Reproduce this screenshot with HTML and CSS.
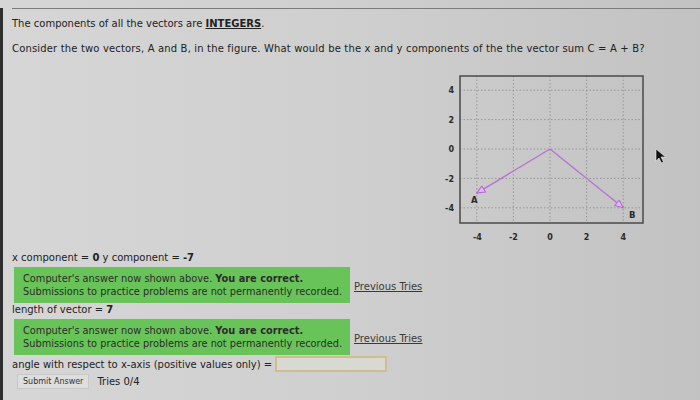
FILE: index.html
```html
<!DOCTYPE html>
<html>
<head>
<meta charset="utf-8">
<link rel="stylesheet" href="styles.css">
</head>
<body>
<div class="page">
  <div class="rule"></div>
  <p class="line first">The components of all the vectors are <b class="u">INTEGERS</b>.</p>
  <p class="line second">Consider the two vectors, A and B, in the figure. What would be the x and y components of the the vector sum C = A + B?</p>
  <div class="figure-row">
    <svg class="graph" width="220" height="175" viewBox="0 0 220 175">
      <defs>
        <marker id="ah" markerWidth="10" markerHeight="8" refX="9" refY="4" orient="auto" markerUnits="userSpaceOnUse">
          <path d="M1,0.5 L9,4 L1,7.5 Z" fill="#e6b8f0" stroke="#b464d2" stroke-width="1"/>
        </marker>
      </defs>
      <g stroke="#8a8a8a" stroke-width="0.8" stroke-dasharray="1.5,2">
        <line x1="36.8" y1="6" x2="36.8" y2="153"/>
        <line x1="73.4" y1="6" x2="73.4" y2="153"/>
        <line x1="110" y1="6" x2="110" y2="153"/>
        <line x1="146.6" y1="6" x2="146.6" y2="153"/>
        <line x1="183.2" y1="6" x2="183.2" y2="153"/>
        <line x1="20" y1="20.2" x2="203" y2="20.2"/>
        <line x1="20" y1="49.6" x2="203" y2="49.6"/>
        <line x1="20" y1="79" x2="203" y2="79"/>
        <line x1="20" y1="108.4" x2="203" y2="108.4"/>
        <line x1="20" y1="137.8" x2="203" y2="137.8"/>
      </g>
      <rect x="20" y="6" width="183" height="147" fill="none" stroke="#4a4a4a" stroke-width="1.5"/>
      <g class="tick" text-anchor="end">
        <text x="14" y="23">4</text>
        <text x="14" y="52.5">2</text>
        <text x="14" y="82">0</text>
        <text x="14" y="111.5">-2</text>
        <text x="14" y="141">-4</text>
      </g>
      <g class="tick" text-anchor="middle">
        <text x="37.5" y="170">-4</text>
        <text x="73.4" y="170">-2</text>
        <text x="110" y="170">0</text>
        <text x="146.6" y="170">2</text>
        <text x="183.2" y="170">4</text>
      </g>
      <g stroke="#b873d6" stroke-width="1.4" fill="none">
        <line x1="110" y1="79" x2="36.8" y2="123.1" marker-end="url(#ah)"/>
        <line x1="110" y1="79" x2="183.2" y2="137.8" marker-end="url(#ah)"/>
      </g>
      <text class="lbl" x="31" y="133">A</text>
      <text class="lbl" x="189" y="148">B</text>
    </svg>
    <svg class="cursor" width="12" height="16" viewBox="0 0 12 16">
      <path d="M1,1 L1,13 L4,10 L6.5,15 L8.5,14 L6,9 L10.5,9 Z" fill="#111" stroke="#eee" stroke-width="0.6"/>
    </svg>
  </div>
  <div class="answers">
    <p class="line">x component = <b>0</b> y component = <b>-7</b></p>
    <div class="result">
      <div class="ok">Computer's answer now shown above. <b>You are correct.</b><br>Submissions to practice problems are not permanently recorded.</div>
      <a class="prev" href="#">Previous Tries</a>
    </div>
    <p class="line">length of vector = <b>7</b></p>
    <div class="result">
      <div class="ok">Computer's answer now shown above. <b>You are correct.</b><br>Submissions to practice problems are not permanently recorded.</div>
      <a class="prev" href="#">Previous Tries</a>
    </div>
    <p class="line angle">angle with respect to x-axis (positive values only) = <span class="input"></span></p>
    <div class="submit-row">
      <span class="btn">Submit Answer</span>
      <span class="tries">Tries 0/4</span>
    </div>
  </div>
</div>
</body>
</html>
```
FILE: styles.css
```css
html, body {
  margin: 0;
  padding: 0;
}
body {
  background: linear-gradient(90deg, #d6d6d6 0%, #cfcfcf 50%, #c2c2c2 100%);
  font-family: "DejaVu Sans", Verdana, sans-serif;
  color: #222;
  width: 700px;
  height: 400px;
  overflow: hidden;
}
.page {
  position: relative;
  height: 400px;
  box-sizing: border-box;
  border-left: 3px solid #2e2e2e;
  border-bottom: 3px solid #e4e4e4;
  padding-left: 9px;
}
.rule {
  height: 1px;
  background: #7c7c7c;
  margin: 8px 0 0 0;
}
.line {
  margin: 0;
  font-size: 10px;
  line-height: 13px;
}
.first {
  margin-top: 8px;
}
.second {
  margin-top: 12px;
  letter-spacing: 0.16px;
}
.u {
  text-decoration: underline;
}
.figure-row {
  position: relative;
  display: flex;
  justify-content: flex-end;
  padding-right: 40px;
  margin-top: 15px;
  height: 181px;
}
.graph .tick text, .graph .lbl {
  font-family: "DejaVu Sans", sans-serif;
  font-size: 8px;
  font-weight: bold;
  fill: #2a2a2a;
}
.graph .lbl {
  font-size: 8.5px;
}
.cursor {
  position: absolute;
  left: 643px;
  top: 78px;
}
.answers {
  display: flex;
  flex-direction: column;
  align-items: flex-start;
}
.result {
  display: flex;
  align-items: flex-end;
  margin: 3px 0 0 2px;
}
.ok {
  background: #68c458;
  color: #2c2c2c;
  font-size: 9.8px;
  line-height: 13px;
  padding: 5px 6px 5px 9px;
  width: 321px;
  white-space: nowrap;
}
.prev {
  color: #3a3a3a;
  font-size: 10px;
  line-height: 13px;
  margin: 0 0 10px 4px;
  text-decoration: underline;
}
.angle {
  display: flex;
  align-items: center;
  margin-top: 1px;
}
.input {
  display: inline-block;
  width: 108px;
  height: 12px;
  border: 2px solid #cdbd90;
  background: #d9d9d4;
  margin-left: 3px;
}
.submit-row {
  display: flex;
  align-items: center;
  margin-top: 2px;
  margin-left: 5px;
}
.btn {
  font-size: 8px;
  line-height: 11px;
  background: #dedede;
  border: 1px solid #c8c8c8;
  padding: 1px 5px;
  color: #333;
}
.tries {
  font-size: 10px;
  margin-left: 8px;
}
```
